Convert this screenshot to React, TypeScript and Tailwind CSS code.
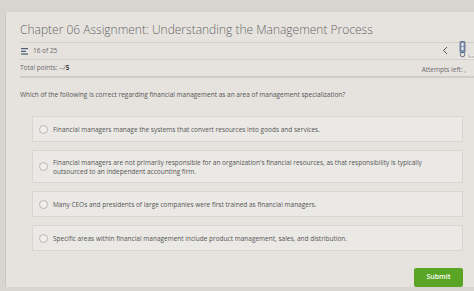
import React from 'react'

const options = [
  'Financial managers manage the systems that convert resources into goods and services.',
  "Financial managers are not primarily responsible for an organization's financial resources, as that responsibility is typically outsourced to an independent accounting firm.",
  'Many CEOs and presidents of large companies were first trained as financial managers.',
  'Specific areas within financial management include product management, sales, and distribution.'
]

function ListIcon() {
  return (
    <svg width="8" height="7" viewBox="0 0 8 7" className="shrink-0">
      <rect x="0" y="0" width="7" height="1.2" fill="#4a5f7a" />
      <rect x="0" y="2.7" width="5" height="1.2" fill="#4a5f7a" />
      <rect x="0" y="5.4" width="7" height="1.2" fill="#4a5f7a" />
    </svg>
  )
}

function OptionRow({ text, tall }: { text: string; tall?: boolean }) {
  return (
    <div
      className={`flex items-center gap-[5px] border border-[#d9d6d1] bg-[#ebe9e5] pl-[6px] pr-4 ${tall ? 'h-[33px]' : 'h-[26px]'}`}
    >
      <span className="h-[9px] w-[9px] shrink-0 rounded-full border border-[#b9b6b2] bg-[#f1efec]" />
      <p className="max-w-[382px] text-[6.5px] leading-[9px] text-[#555]">{text}</p>
    </div>
  )
}

export default function App() {
  return (
    <div
      className="relative h-[291px] w-[474px] overflow-hidden bg-[#d8d5d1]"
      style={{ fontFamily: '"Open Sans", "Liberation Sans", sans-serif' }}
    >
      <div className="ml-[5px] mt-[12px] h-[275px] w-[469px] border-l border-[#c9c6c2] bg-[#e6e3df] pl-[14px]">
        {/* header */}
        <div className="flex h-[31px] items-end border-b border-[#d3d0cc] pb-[3px]">
          <h1 className="text-[12px] font-light leading-[18px] text-[#666]">
            Chapter 06 Assignment: Understanding the Management Process
          </h1>
        </div>
        <div className="relative flex h-[17px] items-center gap-[4px] border-b border-[#d3d0cc] pl-[1px]">
          <ListIcon />
          <span className="text-[6.5px] text-[#6a6a6a]">16 of 25</span>
          <svg width="6" height="9" viewBox="0 0 6 9" className="absolute left-[422px] top-[3px]">
            <path d="M5 1 L1.5 4.5 L5 8" fill="none" stroke="#555" strokeWidth="1" />
          </svg>
          <svg width="7" height="17" viewBox="0 0 7 17" className="absolute left-[439px] top-[-2px]">
            <rect x="1" y="0.5" width="5" height="11" rx="1" fill="#7f93b3" stroke="#55657f" strokeWidth="0.8" />
            <rect x="2.5" y="2" width="2" height="3" fill="#e8edf5" />
            <rect x="2.5" y="6" width="2" height="3" fill="#e8edf5" />
            <circle cx="3.5" cy="13.5" r="2.3" fill="none" stroke="#55657f" strokeWidth="0.9" />
          </svg>
          <span className="absolute left-[447px] top-[12px] rounded-[1px] bg-[#f2f1ee] px-[1px] text-[3px] leading-[4px] text-[#777]">
            Next
          </span>
        </div>
        <div className="flex h-[18px] items-center justify-between border-b-2 border-[#d0cdc9] pr-[8px]">
          <span className="text-[6.5px] text-[#6a6a6a]">
            Total points: --/<b className="font-bold text-[#444]">5</b>
          </span>
          <span className="pt-[3px] text-[6.5px] text-[#6a6a6a]">Attempts left: ,</span>
        </div>
        {/* question */}
        <p className="mt-[12px] text-[6.5px] leading-[9px] text-[#555]">
          Which of the following is correct regarding financial management as an area of management specialization?
        </p>
        <div className="ml-[12px] mr-[11px] mt-[17px] flex flex-col gap-[8px]">
          <OptionRow text={options[0]} />
          <OptionRow text={options[1]} tall />
          <OptionRow text={options[2]} />
          <OptionRow text={options[3]} />
        </div>
        <div className="mr-[11px] mt-[17px] flex justify-end">
          <button className="h-[19px] w-[49px] rounded-[2px] bg-[#5aa526] text-[7px] font-semibold text-white">
            Submit
          </button>
        </div>
      </div>
    </div>
  )
}
